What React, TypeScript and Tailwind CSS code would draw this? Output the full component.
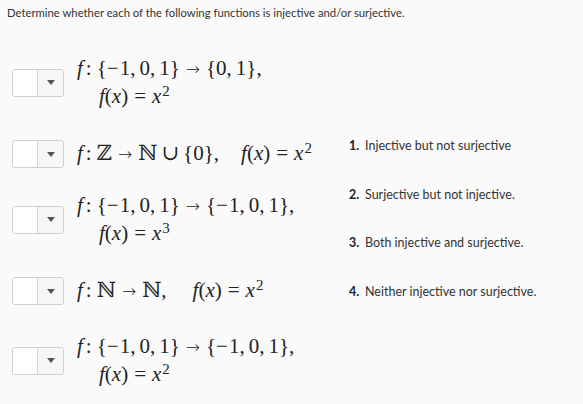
const MATH_FONT = "font-['Liberation_Serif','DejaVu_Serif',serif]";

function Dropdown() {
  return (
    <div className="flex h-[28px] w-[52px] shrink-0 overflow-hidden rounded-[3px] border border-[#cfcfcf] bg-white">
      <div className="w-[24px] bg-white" />
      <div className="flex flex-1 items-center justify-center border-l border-[#d6d6d6] bg-[#f6f6f6]">
        <span className="block h-0 w-0 border-x-[4px] border-t-[5px] border-x-transparent border-t-[#555]" />
      </div>
    </div>
  );
}

function V({ children }: { children: React.ReactNode }) {
  return <i className="italic">{children}</i>;
}

function Sq({ n }: { n: string }) {
  return <sup className="ml-[1px] text-[15px]">{n}</sup>;
}

function Rel({ children }: { children: React.ReactNode }) {
  return <span className="mx-[6px]">{children}</span>;
}

function Arrow() {
  return <span className="mx-[6px] font-['DejaVu_Sans',sans-serif] text-[17px] font-light">→</span>;
}

function Fx({ p }: { p: string }) {
  return (
    <span>
      <V>f</V>(<V>x</V>)<Rel>=</Rel>
      <V>x</V>
      <Sq n={p} />
    </span>
  );
}

function Set({ items }: { items: string[] }) {
  return (
    <span>
      {'{'}
      {items.map((s, i) => (
        <span key={i}>
          {s.startsWith('−') ? (
            <>
              <span className="mr-[1px]">−</span>
              {s.slice(1)}
            </>
          ) : (
            s
          )}
          {i < items.length - 1 && <span className="mr-[4px]">,</span>}
        </span>
      ))}
      {'}'}
    </span>
  );
}

function Head({ to }: { to: string[] }) {
  return (
    <span>
      <V>f</V>
      <span className="ml-[3px] mr-[5px]">:</span>
      <Set items={['−1', '0', '1']} />
      <Arrow />
      <Set items={to} />,
    </span>
  );
}

function Row({ children, className = '' }: { children: React.ReactNode; className?: string }) {
  return (
    <div className={`flex items-center ${className}`}>
      <Dropdown />
      <div className={`ml-[13px] whitespace-nowrap text-[21px] leading-[27px] text-[#222] ${MATH_FONT}`}>{children}</div>
    </div>
  );
}

const options = [
  'Injective but not surjective',
  'Surjective but not injective.',
  'Both injective and surjective.',
  'Neither injective nor surjective.',
];

export default function App() {
  return (
    <div className="h-[404px] w-[583px] overflow-hidden bg-[#fafafa] font-['Lato','Noto_Sans',sans-serif] text-[#333]">
      <p className="pl-[7px] pt-[5px] text-[11.3px] leading-[16px]">
        Determine whether each of the following functions is injective and/or surjective.
      </p>

      <div className="flex">
        <div className="w-[340px] pl-[12px]">
          <Row className="mt-[34px]">
            <div>
              <Head to={['0', '1']} />
            </div>
            <div className="pl-[22px]">
              <Fx p="2" />
            </div>
          </Row>

          <Row className="mt-[30px]">
            <span>
              <V>f</V>
              <span className="ml-[3px] mr-[5px]">:</span>ℤ<Arrow />ℕ
              <span className="mx-[4px]">∪</span>
              <Set items={['0']} />,
            </span>
            <span className="ml-[22px]">
              <Fx p="2" />
            </span>
          </Row>

          <Row className="mt-[24px]">
            <div>
              <Head to={['−1', '0', '1']} />
            </div>
            <div className="pl-[22px]">
              <Fx p="3" />
            </div>
          </Row>

          <Row className="mt-[30px]">
            <span>
              <V>f</V>
              <span className="ml-[3px] mr-[5px]">:</span>ℕ<Arrow />ℕ,
            </span>
            <span className="ml-[26px]">
              <Fx p="2" />
            </span>
          </Row>

          <Row className="mt-[28px]">
            <div>
              <Head to={['−1', '0', '1']} />
            </div>
            <div className="pl-[22px]">
              <Fx p="2" />
            </div>
          </Row>
        </div>

        <ol className="mt-[117px] ml-[9px] flex flex-col gap-[32.5px] text-[12.5px] leading-[16px]">
          {options.map((o, i) => (
            <li key={i} className="flex whitespace-nowrap">
              <span className="w-[16px] font-bold text-[#222]">{i + 1}.</span>
              <span>{o}</span>
            </li>
          ))}
        </ol>
      </div>
    </div>
  );
}
